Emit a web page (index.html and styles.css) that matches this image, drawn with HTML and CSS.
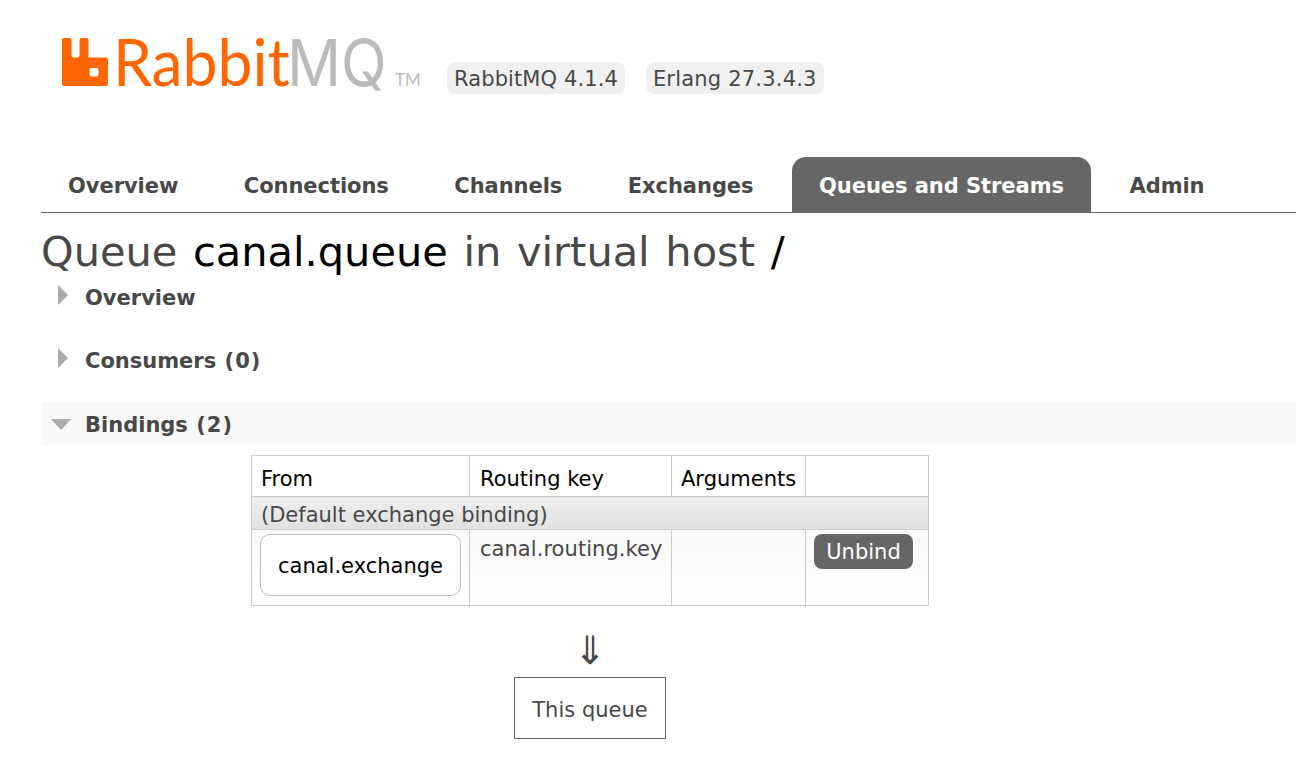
FILE: index.html
```html
<!DOCTYPE html>
<html>
<head>
	<title>RabbitMQ Management</title>
	<link rel="stylesheet" href="styles.css">
</head>
<body>
	<div id="header">
		<div class="logo">
			<svg class="logo-icon" width="46" height="48" viewBox="0 0 46 48">
				<path fill="#ff6600" fill-rule="evenodd" d="M2 0h5.5q2 0 2 2v15.5q0 2 2 2h4q2 0 2-2V2q0-2 2-2h5q2 0 2 2v17.500h17.500q2 0 2 2V46q0 2-2 2H2q-2 0-2-2V2q0-2 2-2zM29.500 30q-2 0-2 2v4.500q0 2 2 2h5q2 0 2-2V32q0-2-2-2z"/>
			</svg>
			<span class="logo-rabbit">Rabbit</span><span class="logo-mq">MQ</span><span class="logo-tm">TM</span>
		</div>
		<span class="version">RabbitMQ 4.1.4</span>
		<span class="version erlang">Erlang 27.3.4.3</span>
	</div>

	<ul id="tabs">
		<li><a href="#">Overview</a></li>
		<li><a href="#">Connections</a></li>
		<li><a href="#">Channels</a></li>
		<li><a href="#">Exchanges</a></li>
		<li><a href="#" class="selected">Queues and Streams</a></li>
		<li><a href="#">Admin</a></li>
	</ul>

	<div id="main">
		<h1>Queue <b>canal.queue</b> in virtual host <b>/</b></h1>

		<div class="section">
			<h2><span class="tri-right"></span>Overview</h2>
		</div>
		<div class="section consumers">
			<h2><span class="tri-right"></span>Consumers <span class="count">(0)</span></h2>
		</div>
		<div class="section open">
			<h2><span class="tri-down"></span>Bindings <span class="count">(2)</span></h2>
		</div>

		<div class="bindings">
			<table class="list">
				<thead>
					<tr>
						<th class="col-from">From</th>
						<th class="col-key">Routing key</th>
						<th class="col-args">Arguments</th>
						<th class="col-btn"></th>
					</tr>
				</thead>
				<tbody>
					<tr class="default-row">
						<td colspan="4">(Default exchange binding)</td>
					</tr>
					<tr class="bind-row">
						<td><a href="#" class="exchange">canal.exchange</a></td>
						<td class="key">canal.routing.key</td>
						<td></td>
						<td><button class="unbind">Unbind</button></td>
					</tr>
				</tbody>
			</table>
			<div class="arrow">&#8659;</div>
			<div class="this-queue">This queue</div>
		</div>
	</div>
</body>
</html>
```

FILE: styles.css
```css
* {
	box-sizing: border-box;
}

body {
	margin: 0;
	font-family: "DejaVu Sans", Verdana, sans-serif;
	font-size: 21px;
	color: #484848;
	background: #fff;
}

#header {
	height: 157px;
	padding-left: 62px;
	padding-top: 36px;
	display: flex;
	align-items: flex-start;
}

.logo {
	display: flex;
	align-items: baseline;
	width: 385px;
	height: 60px;
	font-family: Lato, sans-serif;
	font-size: 66px;
	line-height: 50px;
}

.logo-icon {
	flex: none;
	margin-right: 5px;
}

.logo-rabbit {
	width: 174px;
	color: #ff6600;
	transform: scaleX(0.945);
	transform-origin: left;
}

.logo-mq {
	width: 100px;
	font-family: Inter, sans-serif;
	font-size: 65px;
	font-weight: 400;
	color: #bbbbbb;
	transform: scaleX(0.92);
	transform-origin: left;
}

.logo-tm {
	color: #bbbbbb;
	font-size: 17px;
	line-height: 16px;
	margin-left: 8px;
}

.version {
	background: #f0f0f0;
	border-radius: 8px;
	height: 32px;
	line-height: 34px;
	padding: 0 7px;
	margin: 26px 21px 0 0;
	letter-spacing: 0.1px;
	white-space: nowrap;
}

.version.erlang {
	letter-spacing: 0.2px;
}

#tabs {
	list-style: none;
	margin: 0 0 0 41px;
	padding: 0;
	height: 56px;
	display: flex;
	border-bottom: 1px solid #666;
}

#tabs a {
	display: block;
	height: 55px;
	line-height: 58px;
	padding: 0 27px;
	margin-right: 11.5px;
	font-weight: bold;
	letter-spacing: -0.05px;
	color: #484848;
	text-decoration: none;
	border-radius: 14px 14px 0 0;
}

#tabs a.selected {
	background: #666;
	color: #fff;
}

#main {
	margin-left: 41px;
}

h1 {
	margin: 0;
	height: 70px;
	padding-top: 10px;
	font-size: 41.5px;
	line-height: 58px;
	font-weight: normal;
	word-spacing: 2.5px;
}

h1 b {
	font-weight: normal;
	color: #000;
}

.section {
	height: 63px;
}

.section.consumers {
	height: 56px;
}

.section.open {
	height: 43px;
	background: #f8f8f8;
}

h2 {
	margin: 0;
	font-size: 21px;
	font-weight: bold;
	word-spacing: 1px;
	line-height: 30px;
	padding-left: 44px;
	position: relative;
}

h2 .count {
	letter-spacing: 1px;
}

.section.open h2 {
	line-height: 46px;
}

.tri-right {
	position: absolute;
	left: 17px;
	top: 2px;
	border-left: 10px solid #aaa;
	border-top: 10px solid transparent;
	border-bottom: 10px solid transparent;
}

.tri-down {
	position: absolute;
	left: 10px;
	top: 17px;
	border-top: 11px solid #aaa;
	border-left: 10px solid transparent;
	border-right: 10px solid transparent;
}

.bindings {
	margin: 10px 0 0 210px;
	width: 678px;
}

table.list {
	width: 678px;
	table-layout: fixed;
	border-collapse: collapse;
}

table.list th,
table.list td {
	border: 1px solid #ccc;
	vertical-align: top;
}

table.list th {
	height: 41px;
	padding: 11px 9px 0;
	text-align: left;
	font-weight: normal;
	color: #000;
	white-space: nowrap;
}

table.list th.col-key {
	padding-left: 10px;
}

.col-from { width: 218px; }
.col-key { width: 202px; }
.col-args { width: 134px; }

.default-row td {
	height: 32px;
	padding: 4px 9px 0;
	line-height: 28px;
	background: linear-gradient(#f0f0f0, #e0e0e0);
}

.bind-row td {
	height: 76px;
	padding: 4px 8px;
	background: linear-gradient(#f8f8f8, #ffffff);
	white-space: nowrap;
}

.bind-row td.key {
	padding: 7px 0 0 10px;
	letter-spacing: 0.05px;
}

.exchange {
	display: block;
	height: 62px;
	line-height: 62px;
	text-align: center;
	color: #000;
	text-decoration: none;
	background: #fff;
	border: 1px solid #bbb;
	border-radius: 10px;
}

.unbind {
	display: block;
	margin-top: 0;
	height: 35px;
	width: 99px;
	padding: 0;
	border: 0;
	border-radius: 8px;
	background: #666;
	color: #fff;
	font-family: inherit;
	font-size: 21px;
}

.arrow {
	margin-top: 22px;
	height: 49px;
	text-align: center;
	font-size: 39px;
	line-height: 46px;
}

.this-queue {
	margin: 0 auto;
	width: 152px;
	height: 62px;
	line-height: 64px;
	text-align: center;
	border: 1px solid #666;
}
```
